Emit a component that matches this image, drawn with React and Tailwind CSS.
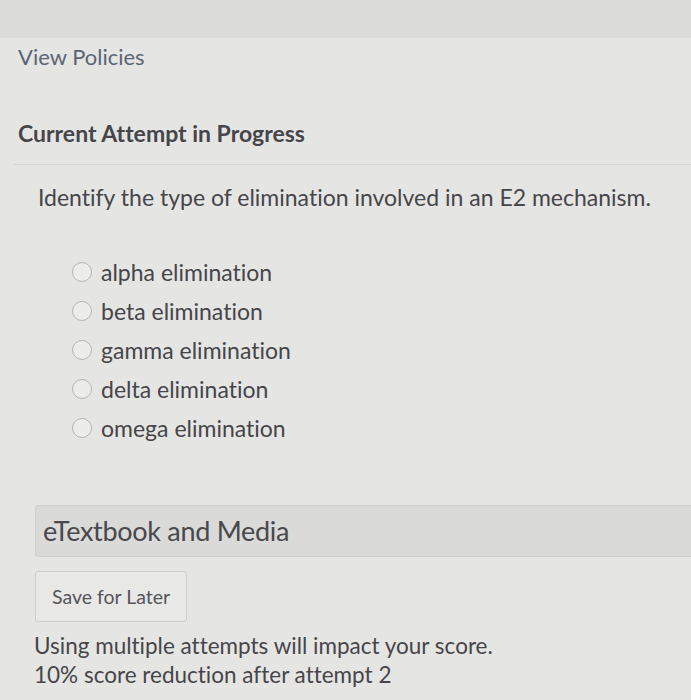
import React from 'react';

const OPTIONS = [
  'alpha elimination',
  'beta elimination',
  'gamma elimination',
  'delta elimination',
  'omega elimination',
];

export default function App() {
  return (
    <div className="w-[691px] h-[700px] overflow-hidden bg-[#e5e5e3] text-[#45454a] [font-variant-ligatures:none]" style={{ fontFamily: 'Lato, "Noto Sans", sans-serif' }}>
      <div className="h-[38px] bg-[#dbdbd9]" />

      <div className="pl-[18px] pt-[3px]">
        <a className="block text-[22px] leading-[32px] text-[#5b6575]">View Policies</a>
      </div>

      <div className="pl-[18px] pt-[45px]">
        <h2 className="text-[23px] leading-[30px] font-bold text-[#45454a]">Current Attempt in Progress</h2>
      </div>

      <div className="ml-[14px] mt-[16px] border-t border-[#d3d3d1]" />

      <p className="pl-[38px] pt-[17px] text-[23px] leading-[30px]">
        Identify the type of elimination involved in an E2 mechanism.
      </p>

      <ul className="pl-[72px] pt-[45px] flex flex-col gap-[9px]">
        {OPTIONS.map((o) => (
          <li key={o} className="flex items-center gap-[9px] h-[30px]">
            <span className="w-[20px] h-[20px] rounded-full border-[1.5px] border-[#b4b4b4] bg-[#ececeb]" />
            <span className="text-[23px] leading-[30px]">{o}</span>
          </li>
        ))}
      </ul>

      <div className="ml-[35px] mt-[62px] h-[52px] bg-[#dadad8] border border-r-0 border-[#cfcfcd] rounded-l-[3px] flex items-center pl-[7px]">
        <span className="text-[27px] tracking-[-0.3px] text-[#48484d]">eTextbook and Media</span>
      </div>

      <div className="ml-[35px] mt-[14px]">
        <button className="w-[152px] h-[51px] border border-[#cdcdcb] rounded-[3px] bg-[#e8e8e6] text-[19.5px] text-[#55555a] text-left pl-[16px]">
          Save for Later
        </button>
      </div>

      <div className="pl-[34px] pt-[9px] text-[22.5px] leading-[29px]">
        <p>Using multiple attempts will impact your score.</p>
        <p>10% score reduction after attempt 2</p>
      </div>
    </div>
  );
}
